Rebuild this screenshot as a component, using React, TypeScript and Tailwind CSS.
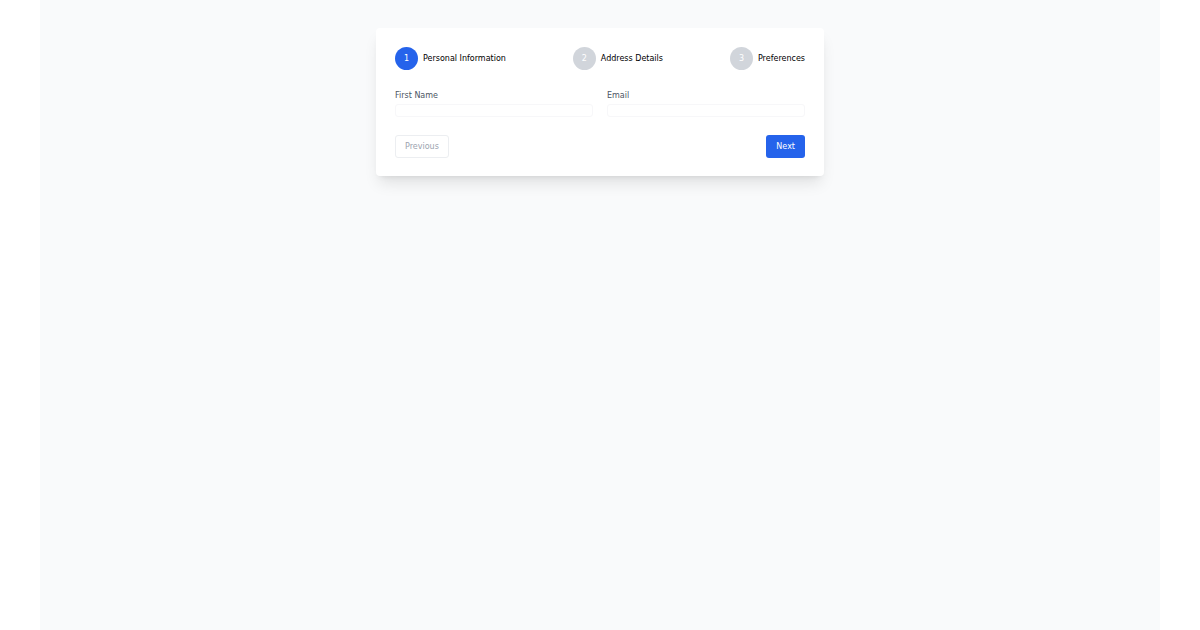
import { useState } from 'react';

const steps = [
  { id: 1, label: 'Personal Information' },
  { id: 2, label: 'Address Details' },
  { id: 3, label: 'Preferences' },
];

function StepIndicator({ current }: { current: number }) {
  return (
    <div className="flex items-center justify-between">
      {steps.map((step) => (
        <div key={step.id} className="flex items-center gap-[5px]">
          <div
            className={
              step.id === current
                ? 'w-[23px] h-[23px] rounded-full bg-[#2563eb] text-white flex items-center justify-center text-[8px]'
                : 'w-[23px] h-[23px] rounded-full bg-[#d1d5db] text-white flex items-center justify-center text-[8px]'
            }
          >
            {step.id}
          </div>
          <span className="text-[8px] text-black">{step.label}</span>
        </div>
      ))}
    </div>
  );
}

function Field({ label }: { label: string }) {
  return (
    <div className="flex flex-col gap-[2px]">
      <label className="text-[8px] leading-[12px] text-[#4b5563]">{label}</label>
      <input className="h-[13px] w-full rounded-[3px] border border-[#f7f7f9] outline-none text-[8px] px-[6px]" />
    </div>
  );
}

export default function App() {
  const [step, setStep] = useState(1);

  return (
    <div className="min-h-screen bg-white" style={{ fontFamily: '"DejaVu Sans", sans-serif' }}>
      <div className="mx-auto w-[1120px] min-h-screen bg-[#f9fafb] pt-[28px]">
        {/* Card */}
        <div className="mx-auto w-[448px] bg-white rounded-[4px] shadow-lg px-[19px] pt-[19px] pb-[18px]">
          <StepIndicator current={step} />

          <div className="grid grid-cols-2 gap-[14px] mt-[20px]">
            <Field label="First Name" />
            <Field label="Email" />
          </div>

          <div className="flex justify-between mt-[18px]">
            <button
              disabled={step === 1}
              onClick={() => setStep((s) => Math.max(1, s - 1))}
              className="h-[23px] px-[9px] rounded-[3px] border border-[#eceef1] text-[8px] text-[#9ca3af] bg-white"
            >
              Previous
            </button>
            <button
              onClick={() => setStep((s) => Math.min(3, s + 1))}
              className="h-[23px] px-[10px] rounded-[3px] bg-[#2563eb] text-[8px] text-white"
            >
              Next
            </button>
          </div>
        </div>
      </div>
    </div>
  );
}
